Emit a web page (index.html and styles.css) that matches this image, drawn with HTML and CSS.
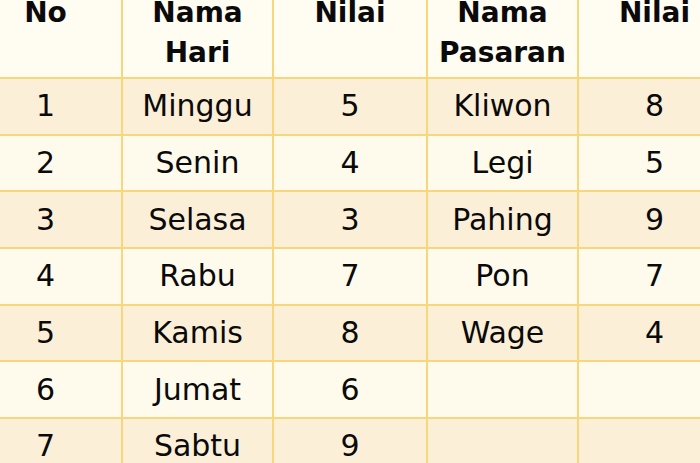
FILE: index.html
```html
<!DOCTYPE html>
<html>
<head>
<meta charset="utf-8">
<link rel="stylesheet" href="styles.css">
</head>
<body>
<table class="weton">
  <colgroup>
    <col class="c-no"><col class="c-hari"><col class="c-nilai"><col class="c-pasaran"><col class="c-nilai2">
  </colgroup>
  <thead>
    <tr>
      <th>No</th>
      <th>Nama<br>Hari</th>
      <th>Nilai</th>
      <th>Nama<br>Pasaran</th>
      <th>Nilai</th>
    </tr>
  </thead>
  <tbody>
    <tr class="odd"><td>1</td><td>Minggu</td><td>5</td><td>Kliwon</td><td>8</td></tr>
    <tr class="even"><td>2</td><td>Senin</td><td>4</td><td>Legi</td><td>5</td></tr>
    <tr class="odd"><td>3</td><td>Selasa</td><td>3</td><td>Pahing</td><td>9</td></tr>
    <tr class="even"><td>4</td><td>Rabu</td><td>7</td><td>Pon</td><td>7</td></tr>
    <tr class="odd"><td>5</td><td>Kamis</td><td>8</td><td>Wage</td><td>4</td></tr>
    <tr class="even"><td>6</td><td>Jumat</td><td>6</td><td></td><td></td></tr>
    <tr class="odd"><td>7</td><td>Sabtu</td><td>9</td><td></td><td></td></tr>
  </tbody>
</table>
</body>
</html>
```
FILE: styles.css
```css
html, body {
  margin: 0;
  padding: 0;
  background: #fffbec;
  overflow: hidden;
}
.weton {
  width: 760px;
  margin-top: -7px;
  margin-left: -30px;
  table-layout: fixed;
  border-collapse: collapse;
  font-family: "Comic Sans MS", "DejaVu Sans", sans-serif;
  color: #0a0a0a;
  text-align: center;
}
.c-no { width: 152px; }
.c-hari { width: 151px; }
.c-nilai { width: 154px; }
.c-pasaran { width: 151px; }
.c-nilai2 { width: 152px; }
.weton th, .weton td {
  border: 2px solid #f7d67c;
  padding: 0;
}
.weton tr > :first-child { border-left: none; }
.weton tr > :last-child { border-right: none; }
.weton thead tr > th { border-top: none; }
.weton th {
  font-size: 28px;
  font-weight: bold;
  line-height: 40px;
  vertical-align: top;
  padding-bottom: 4px;
  height: 80px;
  background: #fffcf1;
}
.weton td {
  font-size: 30px;
  height: 54.7px;
  line-height: 30px;
  vertical-align: middle;
}
.odd td { background: #fcefd8; }
.even td { background: #fffbec; }
```
